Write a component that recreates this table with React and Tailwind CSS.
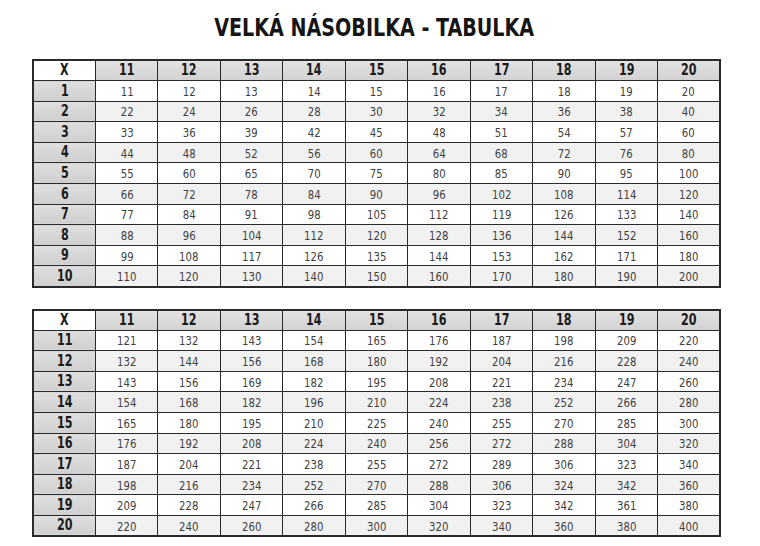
import React from "react";

const cols = [11, 12, 13, 14, 15, 16, 17, 18, 19, 20];
const font = { fontFamily: '"DejaVu Sans Condensed", "DejaVu Sans", sans-serif' };

function H({ children }) {
  return <span className="inline-block scale-x-[0.8] text-[15.5px] font-bold leading-none text-[#1a1a1a]">{children}</span>;
}

function Table({ rows }) {
  return (
    <table className="w-[689px] table-fixed border-collapse border-2 border-[#2a2a2a]">
      <thead>
        <tr className="h-[20.6px]">
          <th className="border-[1.5px] border-[#2a2a2a] bg-white p-0 leading-none"><H>X</H></th>
          {cols.map((c) => (
            <th key={c} className="border-[1.5px] border-[#2a2a2a] bg-gradient-to-b from-[#e2e2e2] to-[#d2d2d2] p-0 leading-none">
              <H>{c}</H>
            </th>
          ))}
        </tr>
      </thead>
      <tbody>
        {rows.map((r, i) => (
          <tr key={r} className={"h-[20.6px] " + (i % 2 === 1 ? "bg-[#f1f1f1]" : "bg-white")}>
            <th className="border-[1.5px] border-[#2a2a2a] bg-gradient-to-b from-[#dedede] to-[#cfcfcf] p-0 leading-none"><H>{r}</H></th>
            {cols.map((c) => (
              <td key={c} className="border-[1.5px] border-[#2a2a2a] p-0 text-center leading-none">
                <span className="inline-block scale-x-[0.9] text-[12.5px] text-[#404040]">{r * c}</span>
              </td>
            ))}
          </tr>
        ))}
      </tbody>
    </table>
  );
}

export default function App() {
  const r1 = [1, 2, 3, 4, 5, 6, 7, 8, 9, 10];
  const r2 = [11, 12, 13, 14, 15, 16, 17, 18, 19, 20];
  return (
    <div className="h-[546px] w-[760px] bg-white font-stretch-condensed" style={font}>
      <div className="flex h-[59px] items-start justify-center pt-[13px] pr-[12px]">
        <h1 className="origin-center scale-x-[0.85] text-[25px] font-bold leading-[30px] text-[#151515]">VELKÁ NÁSOBILKA - TABULKA</h1>
      </div>
      <div className="pl-[32px]">
        <Table rows={r1} />
        <div className="h-[21px]" />
        <Table rows={r2} />
      </div>
    </div>
  );
}
